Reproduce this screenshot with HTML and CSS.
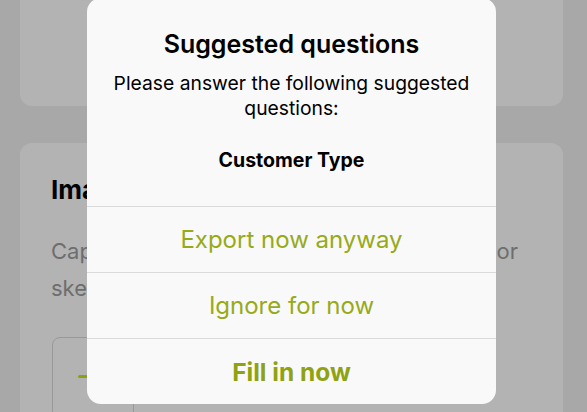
FILE: index.html
```html
<!DOCTYPE html>
<html>
<head>
<meta charset="utf-8">
<link rel="stylesheet" href="styles.css">
</head>
<body>
<div class="page">
  <div class="card card-top"></div>
  <div class="card card-images">
    <h2 class="card-title">Images</h2>
    <p class="card-text">Capture photos, attach documents or sketches to this report.</p>
    <div class="add-box"><span class="plus"></span></div>
  </div>
</div>

<div class="alert">
  <div class="alert-head">
    <div class="alert-title">Suggested questions</div>
    <div class="alert-msg">Please answer the following suggested questions:</div>
    <div class="alert-item">Customer Type</div>
  </div>
  <button class="alert-btn">Export now anyway</button>
  <button class="alert-btn">Ignore for now</button>
  <button class="alert-btn alert-btn-bold">Fill in now</button>
</div>
</body>
</html>
```

FILE: styles.css
```css
html, body {
  margin: 0;
  padding: 0;
  height: 100%;
  overflow: hidden;
}
body {
  background: #a8a8a8;
  font-family: Inter, "Noto Sans", sans-serif;
  position: relative;
}
.page {
  display: flex;
  flex-direction: column;
  gap: 37px;
  padding: 0 24px 0 20px;
  margin-top: -40px;
}
.card {
  background: #b3b3b3;
  border-radius: 12px;
}
.card-top {
  height: 146px;
}
.card-images {
  height: 340px;
  padding: 31px 45px 0 31px;
  box-sizing: border-box;
}
.card-title {
  margin: 0;
  font-size: 26px;
  font-weight: 700;
  color: #000;
  line-height: 32px;
}
.card-text {
  margin: 27px 0 0;
  font-size: 22px;
  line-height: 37px;
  color: #6e6e6e;
  text-align: justify;
}
.add-box {
  margin: 30px 0 0 1px;
  width: 80px;
  height: 80px;
  border: 1.5px solid #999;
  border-radius: 8px;
  display: flex;
  align-items: center;
  justify-content: center;
}
.plus {
  width: 28px;
  height: 3px;
  background: #8da011;
  border-radius: 2px;
  margin-left: -2px;
  margin-top: -4px;
}
.alert {
  position: absolute;
  left: 87px;
  top: -2px;
  width: 409px;
  height: 406px;
  background: #f9f9f9;
  border-radius: 14px;
  display: flex;
  flex-direction: column;
  overflow: hidden;
}
.alert-head {
  height: 208px;
  flex: 0 0 208px;
  box-sizing: border-box;
  padding: 31px 12px 0;
  text-align: center;
  color: #000;
}
.alert-title {
  font-size: 25px;
  font-weight: 600;
  line-height: 30px;
}
.alert-msg {
  margin-top: 12px;
  font-size: 19.3px;
  line-height: 25px;
}
.alert-item {
  margin-top: 27px;
  font-size: 19.5px;
  font-weight: 700;
  line-height: 24px;
}
.alert-btn {
  flex: 0 0 66px;
  border: 0;
  border-top: 1px solid #dadada;
  background: transparent;
  font-family: inherit;
  font-size: 24px;
  color: #97aa1a;
  padding: 0;
}
.alert-btn-bold {
  font-weight: 700;
  font-size: 24.5px;
  color: #8fa212;
}
```
